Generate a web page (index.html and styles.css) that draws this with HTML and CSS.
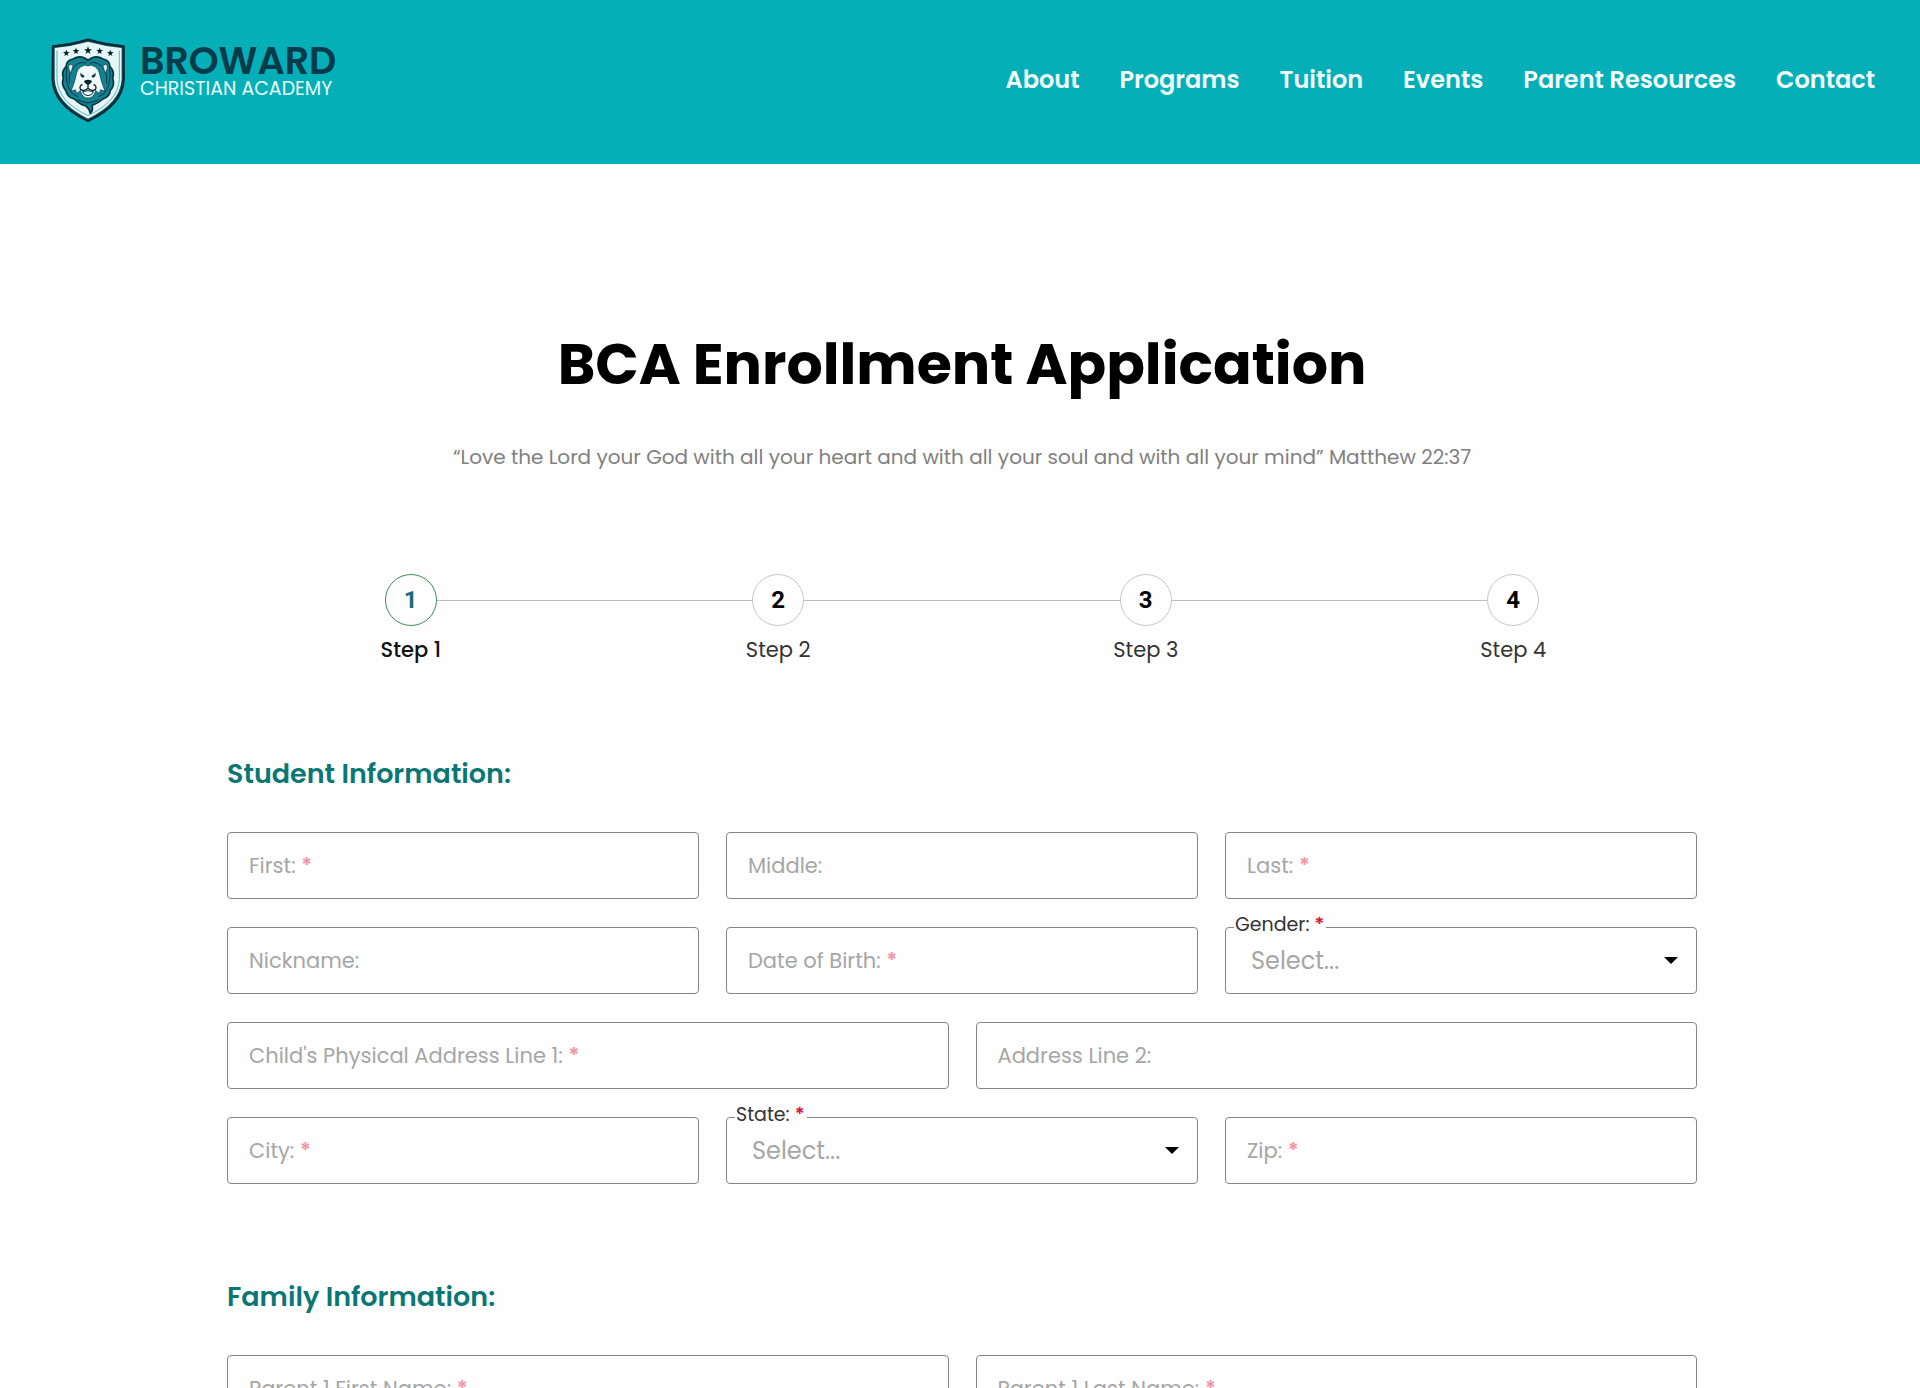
FILE: index.html
```html
<!DOCTYPE html>
<html lang="en">
<head>
  <meta charset="UTF-8" />
  <meta name="viewport" content="width=device-width, initial-scale=1.0"/>
  <title>BCA Enrollment Application</title>
  <link rel="stylesheet" href="styles.css">
</head>
<body>

<header class="site-header">
  <a class="logo" href="#">
    <svg class="crest" viewBox="18 20 222 256" aria-hidden="true">
      <!-- Shield -->
      <path d="M23 46 Q80 41 129 26 Q180 41 237 46 L237 146 Q234 224 129 272 Q25 224 22 146 Z" fill="#0b4650" stroke="#04262f" stroke-width="5" stroke-linejoin="round"/>
      <path d="M29 52 Q80 47 129 33 Q180 47 230 52 L230 146 Q226 218 129 264 Q33 218 29 146 Z" fill="#e4f6f5"/>
      <path d="M36 60 V146 Q39 213 129 255 Q219 213 223 146 V60" fill="none" stroke="#5fb6cb" stroke-width="3"/>
      <!-- Stars -->
      <defs>
        <path id="star" d="M0 -10 L3 -3 L10 -3 L4 2 L6 9 L0 5 L-6 9 L-4 2 L-10 -3 L-3 -3 Z"/>
      </defs>
      <g fill="#04262f">
        <use href="#star" transform="translate(64 67)"/>
        <use href="#star" transform="translate(93 61)"/>
        <use href="#star" transform="translate(129 59) scale(1.2)"/>
        <use href="#star" transform="translate(164 61)"/>
        <use href="#star" transform="translate(196 67)"/>
      </g>
      <!-- Mane -->
      <path d="M129 89 Q108 70 84 85 Q64 88 63 108 Q48 124 55 143 Q48 164 62 179 Q67 200 88 205 Q108 224 123 226 Q133 234 136 248 Q146 238 141 224 Q160 218 174 205 Q194 198 196 179 Q211 163 203 143 Q210 123 195 108 Q194 88 174 85 Q151 70 129 89 Z" fill="#128292" stroke="#04323d" stroke-width="5" stroke-linejoin="round"/>
      <g fill="none" stroke="#04323d" stroke-width="3" stroke-linecap="round">
        <path d="M122 96 Q98 92 84 112 Q68 130 74 158"/>
        <path d="M136 96 Q160 92 174 112 Q190 130 184 158"/>
        <path d="M66 112 Q58 140 72 174 Q80 192 98 198"/>
        <path d="M193 112 Q201 140 187 174 Q179 192 161 198"/>
        <path d="M98 207 Q110 214 129 217 Q148 214 160 207"/>
      </g>
      <path d="M71 104 Q82 98 84 108 L77 127 Q69 116 71 104 Z M187 104 Q176 98 174 108 L181 127 Q189 116 187 104 Z" fill="#e4f6f5" stroke="#04323d" stroke-width="2"/>
      <!-- Face -->
      <path d="M129 106 Q120 100 108 108 Q96 116 94 130 L89 151 L78 182 L91 177 L95 188 L106 180 Q112 202 129 202 Q146 202 152 180 L163 188 L167 177 L180 182 L169 151 L164 130 Q162 116 150 108 Q138 100 129 106 Z" fill="#f0faf9" stroke="#04323d" stroke-width="2"/>
      <path d="M105 127 L119 136 L115 141 L108 138 Z M153 127 L139 136 L143 141 L150 138 Z" fill="#04323d"/>
      <path d="M117 151 Q129 144 141 151 Q138 161 129 162 Q120 161 117 151 Z" fill="#04262f"/>
      <path d="M129 160 V172 M112 161 Q101 167 107 177 Q118 183 129 173 Q140 183 151 177 Q157 167 146 161" fill="none" stroke="#04262f" stroke-width="4"/>
      <path d="M113 183 Q129 177 145 183 Q143 194 129 195 Q115 194 113 183 Z" fill="#f0faf9" stroke="#04323d" stroke-width="3"/>
    </svg>
    <span class="logo-text">
      <span class="logo-name">BROWARD</span>
      <span class="logo-sub">CHRISTIAN ACADEMY</span>
    </span>
  </a>
  <nav class="main-nav">
    <a href="#">About</a>
    <a href="#">Programs</a>
    <a href="#">Tuition</a>
    <a href="#">Events</a>
    <a href="#">Parent Resources</a>
    <a href="#">Contact</a>
  </nav>
</header>

<main class="container">
  <h1>BCA Enrollment Application</h1>
  <p class="verse">“Love the Lord your God with all your heart and with all your soul and with all your mind” Matthew 22:37</p>

  <ol class="steps">
    <li class="step active"><span class="step-number">1</span><span class="step-label">Step 1</span></li>
    <li class="step"><span class="step-number">2</span><span class="step-label">Step 2</span></li>
    <li class="step"><span class="step-number">3</span><span class="step-label">Step 3</span></li>
    <li class="step"><span class="step-number">4</span><span class="step-label">Step 4</span></li>
  </ol>

  <form id="enrollForm">
    <section class="form-section">
      <h2>Student Information:</h2>
      <div class="form-row thirds">
        <div class="form-group">
          <input type="text" id="firstName" required />
          <label for="firstName">First: <span class="req">*</span></label>
        </div>
        <div class="form-group">
          <input type="text" id="middleName" />
          <label for="middleName">Middle:</label>
        </div>
        <div class="form-group">
          <input type="text" id="lastName" required />
          <label for="lastName">Last: <span class="req">*</span></label>
        </div>
        <div class="form-group">
          <input type="text" id="nickname" />
          <label for="nickname">Nickname:</label>
        </div>
        <div class="form-group">
          <input type="text" id="dob" required />
          <label for="dob">Date of Birth: <span class="req">*</span></label>
        </div>
        <div class="form-group select-group">
          <select id="gender" required>
            <option value="">Select...</option>
            <option>Male</option>
            <option>Female</option>
          </select>
          <label for="gender">Gender: <span class="req">*</span></label>
          <svg class="caret" viewBox="0 0 14 7" aria-hidden="true"><path d="M0 0h14L7 7z"/></svg>
        </div>
      </div>
      <div class="form-row halves">
        <div class="form-group">
          <input type="text" id="address1" required />
          <label for="address1">Child's Physical Address Line 1: <span class="req">*</span></label>
        </div>
        <div class="form-group">
          <input type="text" id="address2" />
          <label for="address2">Address Line 2:</label>
        </div>
      </div>
      <div class="form-row thirds">
        <div class="form-group">
          <input type="text" id="city" required />
          <label for="city">City: <span class="req">*</span></label>
        </div>
        <div class="form-group select-group">
          <select id="state" required>
            <option value="">Select...</option>
            <option>Florida</option>
            <option>Georgia</option>
          </select>
          <label for="state">State: <span class="req">*</span></label>
          <svg class="caret" viewBox="0 0 14 7" aria-hidden="true"><path d="M0 0h14L7 7z"/></svg>
        </div>
        <div class="form-group">
          <input type="text" id="zip" required />
          <label for="zip">Zip: <span class="req">*</span></label>
        </div>
      </div>
    </section>

    <section class="form-section">
      <h2>Family Information:</h2>
      <div class="form-row halves">
        <div class="form-group">
          <input type="text" id="parentFirst" required />
          <label for="parentFirst">Parent 1 First Name: <span class="req">*</span></label>
        </div>
        <div class="form-group">
          <input type="text" id="parentLast" required />
          <label for="parentLast">Parent 1 Last Name: <span class="req">*</span></label>
        </div>
      </div>
    </section>
  </form>
</main>

</body>
</html>
```
FILE: styles.css
```css
:root {
  --brand-color: #05afb7;
  --heading-color: #0b7774;
  --border-color: #858585;
  --muted-color: #a6a6a6;
  --page-color: #fefefe;
  --danger-color: #dc143c;
}

* {
  box-sizing: border-box;
  font-family: Poppins, Inter, sans-serif;
}

body {
  margin: 0;
  background: var(--page-color);
  color: #000;
}

/* Header */
.site-header {
  display: flex;
  justify-content: space-between;
  align-items: center;
  min-height: 164px;
  padding: 0 45px 5px 51px;
  background: var(--brand-color);
}

.logo {
  display: flex;
  gap: 15px;
  text-decoration: none;
}

.crest {
  width: 74px;
  height: 86px;
}

.logo-text {
  display: flex;
  flex-direction: column;
  padding-top: 6px;
}

.logo-name {
  font-size: 38px;
  line-height: 36px;
  font-weight: 600;
  color: #063b49;
}

.logo-sub {
  font-size: 19px;
  line-height: 20px;
  color: #e8fbfb;
}

.main-nav {
  display: flex;
  gap: 40px;
}

.main-nav a {
  color: #f2fcfc;
  font-size: 24px;
  font-weight: 600;
  text-decoration: none;
}

/* Page */
.container {
  max-width: 1474px;
  margin: 0 auto;
  padding-left: 4px;
}

h1 {
  margin: 0;
  padding-top: 164px;
  font-size: 57px;
  line-height: 72px;
  font-weight: 700;
  text-align: center;
}

.verse {
  margin: 42px 0 0;
  font-size: 20px;
  line-height: 30px;
  text-align: center;
  color: #808080;
}

/* Steps */
.steps {
  display: flex;
  margin: 102px 0 0;
  padding: 0;
  list-style: none;
}

.step {
  flex: 1;
  display: grid;
  grid-template-columns: 1fr 52px 1fr;
  align-items: center;
  row-gap: 8px;
}

.step::before,
.step::after {
  content: "";
  grid-row: 1;
  height: 1px;
  background: #bdbdbd;
}

.step::before {
  grid-column: 1;
}

.step::after {
  grid-column: 3;
}

.step:first-child::before,
.step:last-child::after {
  background: none;
}

.step-number {
  grid-column: 2;
  grid-row: 1;
  height: 52px;
  border: 1px solid #c8c8c8;
  border-radius: 50%;
  font-family: Roboto, sans-serif;
  font-size: 24px;
  line-height: 50px;
  font-weight: 700;
  text-align: center;
}

.step-label {
  grid-column: 1 / -1;
  font-size: 21px;
  line-height: 32px;
  text-align: center;
  color: #333;
}

.active .step-number {
  border-color: #3c8d57;
  color: #1a6c7e;
}

.active .step-label {
  font-weight: 500;
  color: #111;
}

/* Form */
.form-section {
  padding-top: 90px;
}

.form-section + .form-section {
  padding-top: 95px;
}

h2 {
  margin: 0 0 40px;
  font-size: 27px;
  line-height: 36px;
  font-weight: 600;
  color: var(--heading-color);
}

.form-row {
  display: grid;
  gap: 28px 27px;
  margin-bottom: 28px;
}

.thirds {
  grid-template-columns: repeat(3, 1fr);
}

.halves {
  grid-template-columns: repeat(2, 1fr);
}

.form-row:last-child {
  margin-bottom: 0;
}

/* The label shares the grid cell of its control */
.form-group {
  display: grid;
  grid-template-columns: 1fr;
  align-items: center;
}

.form-group > * {
  grid-area: 1 / 1;
}

input, select {
  width: 100%;
  height: 67px;
  padding: 0 22px;
  border: 1px solid var(--border-color);
  border-radius: 4px;
  background: none;
  font-size: 21px;
}

select {
  appearance: none;
  padding: 0 25px;
  font-size: 24px;
  color: var(--muted-color);
}

input:focus, select:focus {
  border-color: var(--brand-color);
  outline: none;
}

label {
  justify-self: start;
  padding-left: 22px;
  font-size: 21px;
  line-height: 30px;
  color: var(--muted-color);
  pointer-events: none;
}

.req {
  font-weight: 600;
  color: #f093a7;
}

/* Drop-downs keep their label on the top border */
.select-group label {
  align-self: start;
  margin: -12px 0 0 9px;
  padding: 0 2px 0 1px;
  background: var(--page-color);
  font-size: 19px;
  line-height: 20px;
  color: #333;
}

.select-group .req {
  color: var(--danger-color);
}

.caret {
  justify-self: end;
  width: 14px;
  height: 7px;
  margin-right: 19px;
  pointer-events: none;
}

@media (max-width: 900px) {
  .site-header {
    flex-wrap: wrap;
    padding: 16px;
  }

  .main-nav {
    flex-wrap: wrap;
    gap: 16px;
  }

  .container {
    padding: 0 16px;
  }

  .thirds,
  .halves {
    grid-template-columns: 1fr;
  }
}
```
